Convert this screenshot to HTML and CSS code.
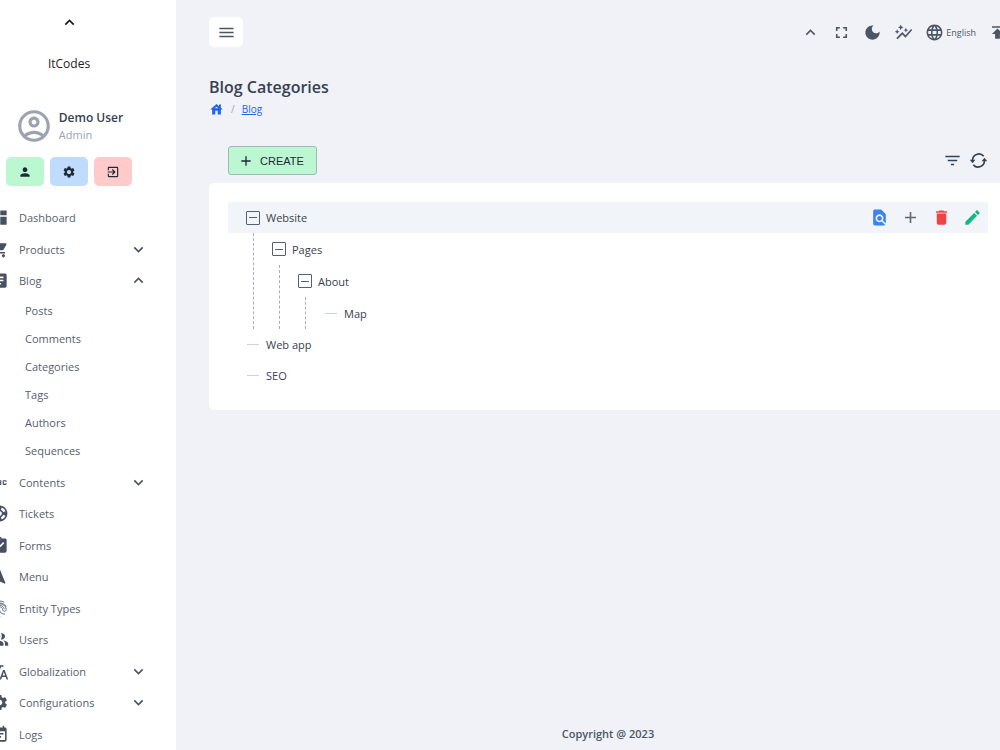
FILE: index.html
```html
<!DOCTYPE html>
<html lang="en">
<head>
    <meta charset="UTF-8">
    <meta name="viewport" content="width=device-width, initial-scale=1.0">
    <title>Blog Categories</title>
    <link rel="stylesheet" href="styles.css">
</head>
<body>

    <svg class="sprite" aria-hidden="true">
        <symbol id="up" viewBox="0 0 24 24"><path d="M7.41 15.41 12 10.83l4.59 4.58L18 14l-6-6-6 6z"/></symbol>
        <symbol id="down" viewBox="0 0 24 24"><path d="M7.41 8.59 12 13.17l4.59-4.58L18 10l-6 6-6-6z"/></symbol>
        <symbol id="settings" viewBox="0 0 24 24"><path d="M19.14 12.94c.04-.3.06-.61.06-.94 0-.32-.02-.64-.07-.94l2.03-1.58c.18-.14.23-.41.12-.61l-1.92-3.32c-.12-.22-.37-.29-.59-.22l-2.39.96c-.5-.38-1.03-.7-1.62-.94l-.36-2.54c-.04-.24-.24-.41-.48-.41h-3.84c-.24 0-.43.17-.47.41l-.36 2.54c-.59.24-1.13.57-1.62.94l-2.39-.96c-.22-.08-.47 0-.59.22L2.74 8.87c-.12.21-.08.47.12.61l2.03 1.58c-.05.3-.09.63-.09.94s.02.64.07.94l-2.03 1.58c-.18.14-.23.41-.12.61l1.92 3.32c.12.22.37.29.59.22l2.39-.96c.5.38 1.03.7 1.62.94l.36 2.54c.05.24.24.41.48.41h3.84c.24 0 .44-.17.47-.41l.36-2.54c.59-.24 1.13-.56 1.62-.94l2.39.96c.22.08.47 0 .59-.22l1.92-3.32c.12-.22.07-.47-.12-.61l-2.01-1.58zM12 15.6c-1.98 0-3.6-1.62-3.6-3.6s1.62-3.6 3.6-3.6 3.6 1.62 3.6 3.6-1.62 3.6-3.6 3.6z"/></symbol>
        <symbol id="add" viewBox="0 0 24 24"><path d="M19 13h-6v6h-2v-6H5v-2h6V5h2v6h6z"/></symbol>
    </svg>

    <div class="app">
        <aside class="sidebar">
            <div class="sidebar-top">
                <button class="collapse" type="button" aria-label="Collapse"><svg class="icon"><use href="#up"/></svg></button>
                <a class="brand" href="#">ItCodes</a>
                <div class="profile">
                    <svg class="avatar" viewBox="0 0 24 24"><path d="M12 2C6.48 2 2 6.48 2 12s4.48 10 10 10 10-4.48 10-10S17.52 2 12 2zM7.35 18.5C8.66 17.56 10.26 17 12 17s3.34.56 4.65 1.5C15.34 19.44 13.74 20 12 20s-3.34-.56-4.65-1.5zm10.79-1.38C16.45 15.8 14.32 15 12 15s-4.45.8-6.14 2.12C4.7 15.73 4 13.95 4 12c0-4.42 3.58-8 8-8s8 3.58 8 8c0 1.95-.7 3.73-1.86 5.12zM12 6c-1.93 0-3.5 1.57-3.5 3.5S10.07 13 12 13s3.5-1.57 3.5-3.5S13.93 6 12 6zm0 5c-.83 0-1.5-.67-1.5-1.5S11.17 8 12 8s1.5.67 1.5 1.5S12.83 11 12 11z"/></svg>
                    <div>
                        <div class="user-name">Demo User</div>
                        <div class="user-role">Admin</div>
                    </div>
                </div>
                <div class="quick">
                    <button class="quick-btn green" type="button" aria-label="Profile"><svg class="icon-sm" viewBox="0 0 24 24"><path d="M12 12c2.21 0 4-1.79 4-4s-1.79-4-4-4-4 1.79-4 4 1.79 4 4 4zm0 2c-2.67 0-8 1.34-8 4v2h16v-2c0-2.66-5.33-4-8-4z"/></svg></button>
                    <button class="quick-btn blue" type="button" aria-label="Settings"><svg class="icon-sm"><use href="#settings"/></svg></button>
                    <button class="quick-btn red" type="button" aria-label="Log out"><svg class="icon-sm" viewBox="0 0 24 24"><path d="M10.09 15.59 11.5 17l5-5-5-5-1.41 1.41L12.67 11H3v2h9.67l-2.58 2.59zM19 3H5c-1.11 0-2 .9-2 2v4h2V5h14v14H5v-4H3v4c0 1.1.89 2 2 2h14c1.1 0 2-.9 2-2V5c0-1.1-.9-2-2-2z"/></svg></button>
                </div>
            </div>

            <nav>
                <ul class="nav">
                    <li>
                        <a href="#"><svg class="icon" viewBox="0 0 24 24"><path d="M3 13h8V3H3v10zm0 8h8v-6H3v6zm10 0h8V11h-8v10zm0-18v6h8V3h-8z"/></svg>Dashboard</a>
                    </li>
                    <li>
                        <a href="#"><svg class="icon" viewBox="0 0 24 24"><path d="M7 18c-1.1 0-1.99.9-1.99 2S5.9 22 7 22s2-.9 2-2-.9-2-2-2zM1 2v2h2l3.6 7.59-1.35 2.45c-.16.28-.25.61-.25.96 0 1.1.9 2 2 2h12v-2H7.42c-.14 0-.25-.11-.25-.25l.03-.12.9-1.63h7.45c.75 0 1.41-.41 1.75-1.03l3.58-6.49c.08-.14.12-.31.12-.48 0-.55-.45-1-1-1H5.21l-.94-2H1zm16 16c-1.1 0-1.99.9-1.99 2s.89 2 1.99 2 2-.9 2-2-.9-2-2-2z"/></svg>Products<svg class="icon arrow"><use href="#down"/></svg></a>
                    </li>
                    <li>
                        <a href="#"><svg class="icon" viewBox="0 0 24 24"><path d="M19 3H5c-1.1 0-2 .9-2 2v14c0 1.1.9 2 2 2h14c1.1 0 2-.9 2-2V5c0-1.1-.9-2-2-2zm-5 14H7v-2h7v2zm3-4H7v-2h10v2zm0-4H7V7h10v2z"/></svg>Blog<svg class="icon arrow"><use href="#up"/></svg></a>
                        <ul class="subnav">
                            <li><a href="#">Posts</a></li>
                            <li><a href="#">Comments</a></li>
                            <li><a href="#">Categories</a></li>
                            <li><a href="#">Tags</a></li>
                            <li><a href="#">Authors</a></li>
                            <li><a href="#">Sequences</a></li>
                        </ul>
                    </li>
                    <li>
                        <a href="#"><svg class="icon" viewBox="0 0 24 24"><path d="M21 11h-1.5v-.5h-2v3h2V13H21v1c0 .55-.45 1-1 1h-3c-.55 0-1-.45-1-1v-4c0-.55.45-1 1-1h3c.55 0 1 .45 1 1v1zM8 10v5H6.5v-1.5h-2V15H3v-5c0-.55.45-1 1-1h3c.55 0 1 .45 1 1zm-1.5.5h-2V12h2v-1.5zm7 1.5c.55 0 1 .45 1 1v1c0 .55-.45 1-1 1h-4V9h4c.55 0 1 .45 1 1v1c0 .55-.45 1-1 1zM11 10.5v.75h2v-.75h-2zm2 2.25h-2v.75h2v-.75z"/></svg>Contents<svg class="icon arrow"><use href="#down"/></svg></a>
                    </li>
                    <li>
                        <a href="#"><svg class="icon" viewBox="0 0 24 24"><path d="M12 2C6.48 2 2 6.48 2 12s4.48 10 10 10 10-4.48 10-10S17.52 2 12 2zm7.46 7.12-2.78 1.15c-.51-1.36-1.58-2.44-2.95-2.94l1.15-2.78c2.1.8 3.77 2.47 4.58 4.57zM12 15c-1.66 0-3-1.34-3-3s1.34-3 3-3 3 1.34 3 3-1.34 3-3 3zM9.13 4.54l1.17 2.78c-1.38.5-2.47 1.59-2.98 2.97L4.54 9.13c.81-2.11 2.48-3.78 4.59-4.59zM4.54 14.87l2.78-1.15c.51 1.38 1.59 2.46 2.97 2.96l-1.17 2.78c-2.1-.81-3.77-2.48-4.58-4.59zm10.34 4.59-1.15-2.78c1.37-.51 2.45-1.59 2.95-2.97l2.78 1.17c-.81 2.1-2.48 3.77-4.58 4.58z"/></svg>Tickets</a>
                    </li>
                    <li>
                        <a href="#"><svg class="icon" viewBox="0 0 24 24"><path d="M19 3h-4.18C14.4 1.84 13.3 1 12 1c-1.3 0-2.4.84-2.82 2H5c-1.1 0-2 .9-2 2v14c0 1.1.9 2 2 2h14c1.1 0 2-.9 2-2V5c0-1.1-.9-2-2-2zm-7 0c.55 0 1 .45 1 1s-.45 1-1 1-1-.45-1-1 .45-1 1-1zm-2 14-4-4 1.41-1.41L10 14.17l6.59-6.59L18 9l-8 8z"/></svg>Forms</a>
                    </li>
                    <li>
                        <a href="#"><svg class="icon" viewBox="0 0 24 24"><path d="M12 2 4.5 20.29l.71.71L12 18l6.79 3 .71-.71z"/></svg>Menu</a>
                    </li>
                    <li>
                        <a href="#"><svg class="icon line-thin" viewBox="0 0 24 24"><path d="M6 4c4-2 8-2 12 0M3.5 9.5c4-6 13-6 17 0M5 20c-1-3-1.500-5-1-8C5.500 4 20 4 20.500 13c0 3-4 3.500-4.500.5-.5-5-8-4.500-8 .5 0 4 2 6.500 5 8M6 16c-1-10 11-10 12-3M12 13c0 4 3 6.500 7 6"/></svg>Entity Types</a>
                    </li>
                    <li>
                        <a href="#"><svg class="icon" viewBox="0 0 24 24"><path d="M16.67 13.13C18.04 14.06 19 15.32 19 17v3h4v-3c0-2.18-3.57-3.47-6.33-3.87zM15 12c2.21 0 4-1.79 4-4s-1.79-4-4-4c-.47 0-.91.1-1.33.24C14.5 5.27 15 6.58 15 8s-.5 2.73-1.33 3.76c.42.14.86.24 1.33.24zM9 12c2.21 0 4-1.79 4-4s-1.79-4-4-4-4 1.79-4 4 1.79 4 4 4zm0 1c-2.67 0-8 1.34-8 4v3h16v-3c0-2.66-5.33-4-8-4z"/></svg>Users</a>
                    </li>
                    <li>
                        <a href="#"><svg class="icon" viewBox="0 0 24 24"><path d="m12.87 15.07-2.54-2.51.03-.03c1.74-1.94 2.98-4.17 3.71-6.53H17V4h-7V2H8v2H1v1.99h11.17C11.5 7.92 10.44 9.75 9 11.35 8.07 10.32 7.3 9.19 6.69 8h-2c.73 1.63 1.73 3.17 2.98 4.56l-5.09 5.02L4 19l5-5 3.11 3.11.76-2.04zM18.5 10h-2L12 22h2l1.12-3h4.75L21 22h2l-4.5-12zm-2.62 7 1.62-4.33L19.12 17h-3.24z"/></svg>Globalization<svg class="icon arrow"><use href="#down"/></svg></a>
                    </li>
                    <li>
                        <a href="#"><svg class="icon"><use href="#settings"/></svg>Configurations<svg class="icon arrow"><use href="#down"/></svg></a>
                    </li>
                    <li>
                        <a href="#"><svg class="icon" viewBox="0 0 24 24"><path d="M17 10H7v2h10v-2zm2-7h-1V1h-2v2H8V1H6v2H5c-1.11 0-1.99.9-1.99 2L3 19c0 1.1.89 2 2 2h14c1.1 0 2-.9 2-2V5c0-1.1-.9-2-2-2zm0 16H5V8h14v11zm-5-5H7v2h7v-2z"/></svg>Logs</a>
                    </li>
                </ul>
            </nav>
        </aside>

        <div class="main">
            <header class="topbar">
                <button class="menu-btn" type="button" aria-label="Menu"><svg class="icon" viewBox="0 0 24 24"><path d="M3 18h18v-2H3v2zm0-5h18v-2H3v2zm0-7v2h18V6H3z"/></svg></button>
                <div class="tools">
                    <button type="button" aria-label="Hide"><svg class="icon"><use href="#up"/></svg></button>
                    <button type="button" aria-label="Full screen"><svg class="icon" viewBox="0 0 24 24"><path d="M7 14H5v5h5v-2H7v-3zm-2-4h2V7h3V5H5v5zm12 7h-3v2h5v-5h-2v3zM14 5v2h3v3h2V5h-5z"/></svg></button>
                    <button type="button" aria-label="Dark mode"><svg class="icon" viewBox="0 0 24 24"><path d="M12 3c-4.97 0-9 4.03-9 9s4.03 9 9 9 9-4.03 9-9c0-.46-.04-.92-.1-1.36-.98 1.37-2.58 2.26-4.4 2.26-2.98 0-5.4-2.42-5.4-5.4 0-1.81.89-3.42 2.26-4.4-.44-.06-.9-.1-1.36-.1z"/></svg></button>
                    <button type="button" aria-label="Statistics"><svg class="icon" viewBox="0 0 24 24"><path d="M14.06 9.94 12 9l2.06-.94L15 6l.94 2.06L18 9l-2.06.94L15 12zM4 14l.94-2.06L7 11l-2.06-.94L4 8l-.94 2.06L1 11l2.06.94zm4.5-5 1.09-2.41L12 5.5 9.59 4.41 8.5 2 7.41 4.41 5 5.5l2.41 1.09zm-4 11.5 6-6.01 4 4L23 8.93l-1.41-1.41-7.09 7.97-4-4L3 19z"/></svg></button>
                    <button class="lang" type="button"><svg class="icon" viewBox="0 0 24 24"><path d="M11.99 2C6.47 2 2 6.48 2 12s4.47 10 9.99 10C17.52 22 22 17.52 22 12S17.52 2 11.99 2zm6.93 6h-2.95c-.32-1.25-.78-2.45-1.38-3.56 1.84.63 3.37 1.91 4.33 3.56zM12 4.04c.83 1.2 1.48 2.53 1.91 3.96h-3.82c.43-1.43 1.08-2.76 1.91-3.96zM4.26 14C4.1 13.36 4 12.69 4 12s.1-1.36.26-2h3.38c-.08.66-.14 1.32-.14 2 0 .68.06 1.34.14 2H4.26zm.82 2h2.95c.32 1.25.78 2.45 1.38 3.56-1.84-.63-3.37-1.9-4.33-3.56zm2.95-8H5.08c.96-1.66 2.49-2.93 4.33-3.56C8.81 5.55 8.35 6.75 8.03 8zM12 19.96c-.83-1.2-1.48-2.53-1.91-3.96h3.82c-.43 1.43-1.08 2.76-1.91 3.96zM14.34 14H9.66c-.09-.66-.16-1.32-.16-2 0-.68.07-1.35.16-2h4.68c.09.65.16 1.32.16 2 0 .68-.07 1.34-.16 2zm.25 5.56c.6-1.11 1.06-2.31 1.38-3.56h2.95c-.96 1.65-2.49 2.93-4.33 3.56zM16.36 14c.08-.66.14-1.32.14-2 0-.68-.06-1.34-.14-2h3.38c.16.64.26 1.31.26 2s-.1 1.36-.26 2h-3.38z"/></svg>English</button>
                    <button type="button" aria-label="Scroll to top"><svg class="icon" viewBox="0 0 24 24"><path d="M5 4v2h14V4H5zm0 10h4v6h6v-6h4l-7-7-7 7z"/></svg></button>
                </div>
            </header>

            <main>
                <h1>Blog Categories</h1>
                <div class="breadcrumb">
                    <a href="#" aria-label="Home"><svg viewBox="0 0 24 24"><path d="M19 9.3V4h-3v2.6L12 3 2 12h3v8h5v-6h4v6h5v-8h3l-3-2.7zm-9 .7c0-1.1.9-2 2-2s2 .9 2 2h-4z"/></svg></a>
                    <span>/</span>
                    <a href="#">Blog</a>
                </div>

                <div class="actions">
                    <button class="create" type="button"><svg class="icon-md"><use href="#add"/></svg>CREATE</button>
                    <div class="actions-right">
                        <button type="button" aria-label="Filter"><svg class="icon" viewBox="0 0 24 24"><path d="M10 18h4v-2h-4v2zM3 6v2h18V6H3zm3 7h12v-2H6v2z"/></svg></button>
                        <button type="button" aria-label="Refresh"><svg class="icon" viewBox="0 0 24 24"><path class="line" d="M18.500 6.500A8 8 0 0 0 4.500 12M5.500 17.500A8 8 0 0 0 19.500 12"/><path d="M1 11h7l-3.500 4.500zM16 13h7l-3.500-4.500z"/></svg></button>
                    </div>
                </div>

                <section class="card">
                    <ul class="tree">
                        <li>
                            <div class="node active">
                                <button class="toggle" type="button" aria-label="Collapse Website"></button>Website
                                <div class="node-actions">
                                    <button class="c-blue" type="button" aria-label="View"><svg class="icon" viewBox="0 0 24 24"><path d="M20 19.59V8l-6-6H6c-1.1 0-1.99.9-1.99 2L4 20c0 1.1.89 2 1.99 2H18c.45 0 .85-.15 1.19-.4l-4.43-4.43c-.8.52-1.74.83-2.76.83-2.76 0-5-2.24-5-5s2.24-5 5-5 5 2.24 5 5c0 1.02-.31 1.96-.83 2.75L20 19.59zM9 13c0 1.66 1.34 3 3 3s3-1.34 3-3-1.34-3-3-3-3 1.34-3 3z"/></svg></button>
                                    <button class="c-gray" type="button" aria-label="Add"><svg class="icon"><use href="#add"/></svg></button>
                                    <button class="c-red" type="button" aria-label="Delete"><svg class="icon" viewBox="0 0 24 24"><path d="M6 19c0 1.1.9 2 2 2h8c1.1 0 2-.9 2-2V7H6v12zM19 4h-3.5l-1-1h-5l-1 1H5v2h14V4z"/></svg></button>
                                    <button class="c-green" type="button" aria-label="Edit"><svg class="icon" viewBox="0 0 24 24"><path d="M3 17.25V21h3.75L17.81 9.94l-3.75-3.75L3 17.25zM20.71 7.04c.39-.39.39-1.02 0-1.41l-2.34-2.34c-.39-.39-1.02-.39-1.41 0l-1.83 1.83 3.75 3.75 1.83-1.83z"/></svg></button>
                                </div>
                            </div>
                            <ul>
                                <li>
                                    <div class="node"><button class="toggle" type="button" aria-label="Collapse Pages"></button>Pages</div>
                                    <ul>
                                        <li>
                                            <div class="node"><button class="toggle" type="button" aria-label="Collapse About"></button>About</div>
                                            <ul>
                                                <li><div class="node"><span class="leaf"></span>Map</div></li>
                                            </ul>
                                        </li>
                                    </ul>
                                </li>
                            </ul>
                        </li>
                        <li><div class="node"><span class="leaf"></span>Web app</div></li>
                        <li><div class="node"><span class="leaf"></span>SEO</div></li>
                    </ul>
                </section>
            </main>

            <footer>Copyright @ 2023</footer>
        </div>
    </div>

</body>
</html>
```
FILE: styles.css
```css
* {
    box-sizing: border-box;
}
body {
    font-family: "Segoe UI", "Open Sans", "Noto Sans", sans-serif;
    font-size: 11px;
    margin: 0;
    color: #374151;
    background-color: #f0f2f7;
}
ul {
    list-style: none;
    margin: 0;
    padding: 0;
}
button {
    display: flex;
    align-items: center;
    justify-content: center;
    padding: 0;
    border: none;
    background: none;
    color: inherit;
    font: inherit;
    cursor: pointer;
}
svg {
    display: block;
    flex-shrink: 0;
    fill: currentColor;
}
.sprite {
    display: none;
}
.icon {
    width: 19px;
    height: 19px;
}
.icon-md {
    width: 16px;
    height: 16px;
}
.icon-sm {
    width: 14px;
    height: 14px;
}
.line, .line-thin {
    fill: none;
    stroke: currentColor;
    stroke-width: 2;
}
.line-thin {
    stroke-width: 1;
}
.app {
    display: flex;
    height: 100vh;
    overflow: hidden;
}

/* Sidebar */
.sidebar {
    width: 176px;
    flex-shrink: 0;
    padding-right: 38px;
    background-color: #fff;
    overflow: hidden;
}
.sidebar-top {
    display: flex;
    flex-direction: column;
    align-items: center;
    padding-top: 13px;
}
.collapse {
    color: #111;
}
.brand {
    margin-top: 22px;
    font-size: 12px;
    line-height: 20px;
    color: #222;
    text-decoration: none;
}
.profile {
    display: flex;
    align-items: center;
    gap: 6px;
    margin-top: 33px;
}
.avatar {
    width: 38px;
    height: 38px;
    color: #9ca3af;
}
.user-name {
    font-size: 12px;
    font-weight: 600;
    line-height: 18px;
    color: #374151;
}
.user-role {
    line-height: 16px;
    color: #9ca3af;
}
.quick {
    display: flex;
    gap: 6px;
    margin-top: 12px;
}
.quick-btn {
    width: 38px;
    height: 29px;
    border-radius: 5px;
    color: #1f2937;
}
.green {
    background-color: #bbf7d0;
}
.blue {
    background-color: #bfdbfe;
}
.red {
    background-color: #fecaca;
}
.nav {
    margin: 16px -10px 0;
}
.nav > li:nth-child(even) {
    margin-top: 1px;
}
.nav a {
    display: flex;
    align-items: center;
    gap: 10px;
    height: 31px;
    color: #57606e;
    text-decoration: none;
}
.nav .icon {
    color: #475162;
}
.nav .arrow {
    margin-left: auto;
}
.subnav {
    padding: 0 0 2px 35px;
}
.subnav a {
    height: 28px;
}

/* Main area, runs past the right edge of the window */
.main {
    display: flex;
    flex-direction: column;
    flex: 1;
    min-width: 0;
    margin-right: -40px;
    padding: 0 33px;
}
.topbar {
    display: flex;
    align-items: center;
    justify-content: space-between;
    height: 64px;
    color: #4b5563;
}
.menu-btn {
    width: 34px;
    height: 30px;
    border-radius: 5px;
    background-color: #fff;
}
.tools {
    display: flex;
    gap: 12px;
}
.lang {
    gap: 2px;
    font-size: 9px;
}
main {
    flex: 1;
}
h1 {
    margin: 12px 0 0;
    font-size: 16px;
    font-weight: 600;
    line-height: 22px;
    color: #374151;
}
.breadcrumb {
    display: flex;
    align-items: center;
    gap: 7px;
    height: 22px;
    font-size: 10px;
    color: #9ca3af;
}
.breadcrumb a {
    color: #2563eb;
}
.breadcrumb svg {
    width: 15px;
    height: 15px;
}
.actions {
    display: flex;
    align-items: center;
    justify-content: space-between;
    margin: 26px 19px 8px;
}
.create {
    gap: 6px;
    height: 29px;
    padding: 0 12px 0 9px;
    border: 1px solid #a3b8b5;
    border-radius: 3px;
    background-color: #bbf7d0;
    font-family: "Liberation Sans", Arial, sans-serif;
    color: #1f2937;
}
.actions-right {
    display: flex;
    gap: 7px;
}
.card {
    padding: 19px;
    border-radius: 5px;
    background-color: #fff;
}

/* Category tree */
.tree {
    color: #374151;
}
.tree ul {
    margin-left: 25px;
    border-left: 1px dashed #a8b0bd;
}
.node {
    display: flex;
    align-items: center;
    gap: 6px;
    height: 31px;
    padding-left: 18px;
}
.tree ul .node {
    height: 32px;
}
.active {
    background-color: #f1f5f9;
}
.toggle {
    width: 14px;
    height: 14px;
    border: 1px solid #52607a;
    border-radius: 1px;
}
.toggle::before {
    content: "";
    width: 8px;
    height: 1px;
    background-color: #52607a;
}
.leaf {
    width: 12px;
    height: 1px;
    margin: 0 1px;
    background-color: #cbd5e1;
}
.node-actions {
    display: flex;
    gap: 12px;
    margin-left: auto;
    padding-right: 6px;
}
.c-blue {
    color: #3b82f6;
}
.c-gray {
    color: #5f6673;
}
.c-red {
    color: #ef4444;
}
.c-green {
    color: #10b981;
}
footer {
    padding-bottom: 8px;
    text-align: center;
    font-weight: 600;
    line-height: 16px;
    color: #4b5563;
}
```
